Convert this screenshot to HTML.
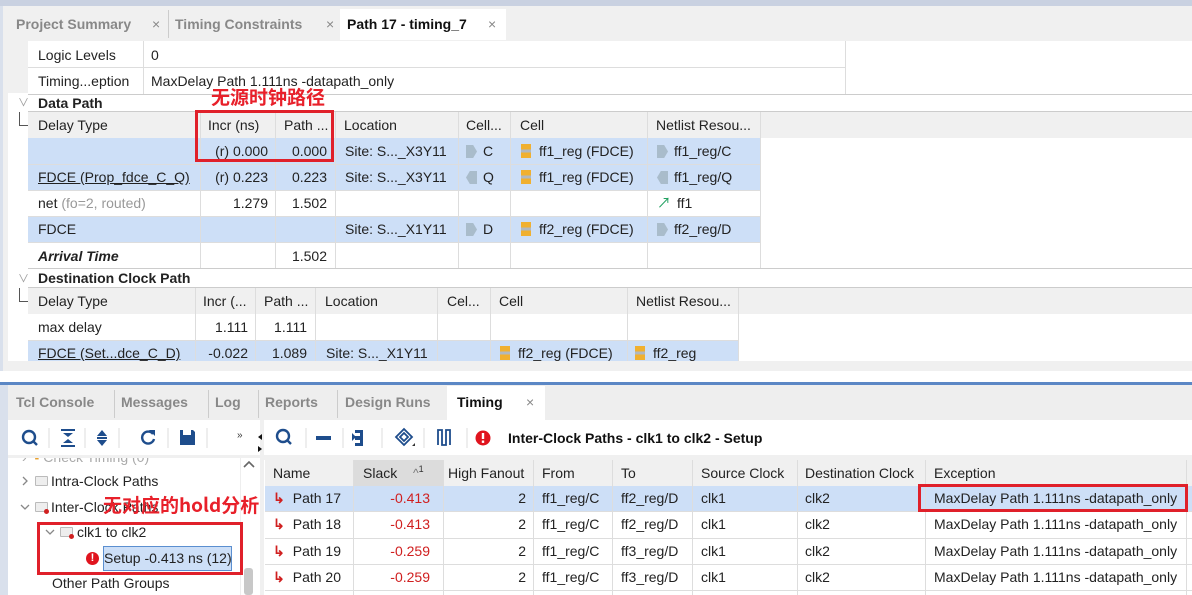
<!DOCTYPE html>
<html><head><meta charset="utf-8"><style>
*{box-sizing:border-box;margin:0;padding:0}
body{width:1192px;height:595px;overflow:hidden;background:#fff;font-family:"Liberation Sans","Noto Sans CJK SC",sans-serif;font-size:14px;color:#222;position:relative}
.a{position:absolute}
.t{position:absolute;white-space:nowrap;line-height:26px}
.hd{background:#f0f0f0}
.sel{background:#cddff7}
.vl{position:absolute;width:1px;background:#ddd}
.hl{position:absolute;height:1px;background:#ddd}
.tab{position:absolute;color:#888;font-weight:bold;font-size:14px;line-height:32px}
.box{position:absolute;border:3px solid #e0202a}
.cn{position:absolute;color:#e8202a;font-weight:bold;white-space:nowrap;font-family:"Noto Sans CJK SC","WenQuanYi Zen Hei",sans-serif;line-height:1}
.pin{display:inline-block;width:11px;height:13px;background:#a9bccb;vertical-align:-2px;margin-right:6px;clip-path:polygon(0 0,65% 0,100% 50%,65% 100%,0 100%)}
.pinl{clip-path:polygon(35% 0,100% 0,100% 100%,35% 100%,0 50%)}
.ff{display:inline-block;width:10px;height:14px;background:linear-gradient(#f0b030 0 40%,#b0b8c0 40% 60%,#f0b030 60%);vertical-align:-2px;margin-right:8px}
.arr{color:#d02020;font-weight:bold;margin-right:8px}
.fold{position:absolute;width:13px;height:10px;border:1px solid #bbb;background:#eee;border-radius:1px}
.dot{position:absolute;width:5px;height:5px;border-radius:50%;background:#d02020}
</style></head><body>
<div class="a" style="left:0;top:0;width:1192px;height:6px;background:#c9d1e1"></div>
<div class="a" style="left:0;top:6px;width:1192px;height:365px;background:#f0f0f0"></div>
<div class="a" style="left:0;top:6px;width:3px;height:365px;background:#d9e0ec"></div>
<div class="tab" style="left:16px;top:8px">Project Summary</div><div class="tab" style="left:152px;top:8px;font-weight:normal">×</div>
<div class="a" style="left:168px;top:10px;width:1px;height:28px;background:#ccc"></div>
<div class="tab" style="left:175px;top:8px">Timing Constraints</div><div class="tab" style="left:326px;top:8px;font-weight:normal">×</div>
<div class="a" style="left:340px;top:9px;width:166px;height:31px;background:#fff"></div>
<div class="tab" style="left:347px;top:8px;color:#111">Path 17 - timing_7</div><div class="tab" style="left:488px;top:8px;font-weight:normal">×</div>
<div class="a" style="left:8px;top:41px;width:1184px;height:320px;background:#fff"></div>
<div class="a" style="left:8px;top:41px;width:20px;height:52px;background:#f0f0f0"></div>
<div class="hl" style="left:28px;top:67px;width:817px"></div>
<div class="hl" style="left:28px;top:94px;width:1164px;background:#ccc"></div>
<div class="vl" style="left:143px;top:41px;height:53px"></div>
<div class="vl" style="left:845px;top:41px;height:53px"></div>
<div class="t" style="left:38px;top:42px">Logic Levels</div><div class="t" style="left:151px;top:42px">0</div>
<div class="t" style="left:38px;top:68px">Timing...eption</div><div class="t" style="left:151px;top:68px">MaxDelay Path 1.111ns -datapath_only</div>
<div class="t" style="left:18px;top:90px;color:#999;font-size:11px">∨</div>
<div class="t" style="left:38px;top:90px;font-weight:bold">Data Path</div>
<div class="a" style="left:19px;top:112px;width:10px;height:14px;border-left:1px solid #555;border-bottom:1px solid #555"></div>
<div class="a hd" style="left:28px;top:112px;width:1164px;height:26px"></div>
<div class="hl" style="left:28px;top:111px;width:1164px;background:#ccc"></div>
<div class="a sel" style="left:28px;top:138px;width:732px;height:52px"></div>
<div class="a sel" style="left:28px;top:216px;width:732px;height:26px"></div>
<div class="hl" style="left:28px;top:164px;width:732px"></div>
<div class="hl" style="left:28px;top:190px;width:732px"></div>
<div class="hl" style="left:28px;top:216px;width:732px"></div>
<div class="hl" style="left:28px;top:242px;width:732px"></div>
<div class="hl" style="left:28px;top:268px;width:1164px;background:#ccc"></div>
<div class="vl" style="left:200px;top:112px;height:156px"></div>
<div class="vl" style="left:275px;top:112px;height:156px"></div>
<div class="vl" style="left:335px;top:112px;height:156px"></div>
<div class="vl" style="left:458px;top:112px;height:156px"></div>
<div class="vl" style="left:510px;top:112px;height:156px"></div>
<div class="vl" style="left:647px;top:112px;height:156px"></div>
<div class="vl" style="left:760px;top:112px;height:156px"></div>
<div class="t" style="left:38px;top:112px">Delay Type</div><div class="t" style="left:208px;top:112px">Incr (ns)</div><div class="t" style="left:284px;top:112px">Path ...</div><div class="t" style="left:344px;top:112px">Location</div><div class="t" style="left:466px;top:112px">Cell...</div><div class="t" style="left:520px;top:112px">Cell</div><div class="t" style="left:656px;top:112px">Netlist Resou...</div>
<div class="t" style="left:210px;top:138px;width:58px;text-align:right">(r) 0.000</div><div class="t" style="left:275px;top:138px;width:52px;text-align:right">0.000</div><div class="t" style="left:345px;top:138px">Site: S..._X3Y11</div><div class="t" style="left:466px;top:138px"><span class="pin"></span>C</div><div class="t" style="left:521px;top:138px"><span class="ff"></span>ff1_reg (FDCE)</div><div class="t" style="left:657px;top:138px"><span class="pin"></span>ff1_reg/C</div>
<div class="t" style="left:38px;top:164px;text-decoration:underline">FDCE (Prop_fdce_C_Q)</div><div class="t" style="left:210px;top:164px;width:58px;text-align:right">(r) 0.223</div><div class="t" style="left:275px;top:164px;width:52px;text-align:right">0.223</div><div class="t" style="left:345px;top:164px">Site: S..._X3Y11</div><div class="t" style="left:466px;top:164px"><span class="pin pinl"></span>Q</div><div class="t" style="left:521px;top:164px"><span class="ff"></span>ff1_reg (FDCE)</div><div class="t" style="left:657px;top:164px"><span class="pin pinl"></span>ff1_reg/Q</div>
<div class="t" style="left:38px;top:190px">net <span style="color:#999">(fo=2, routed)</span></div><div class="t" style="left:210px;top:190px;width:58px;text-align:right">1.279</div><div class="t" style="left:275px;top:190px;width:52px;text-align:right">1.502</div><div class="t" style="left:657px;top:190px"><span style="color:#20a060;margin-right:6px">↗</span>ff1</div>
<div class="t" style="left:38px;top:216px">FDCE</div><div class="t" style="left:345px;top:216px">Site: S..._X1Y11</div><div class="t" style="left:466px;top:216px"><span class="pin"></span>D</div><div class="t" style="left:521px;top:216px"><span class="ff"></span>ff2_reg (FDCE)</div><div class="t" style="left:657px;top:216px"><span class="pin"></span>ff2_reg/D</div>
<div class="t" style="left:38px;top:243px;font-weight:bold;font-style:italic">Arrival Time</div><div class="t" style="left:275px;top:243px;width:52px;text-align:right">1.502</div>
<div class="t" style="left:18px;top:266px;color:#999;font-size:11px">∨</div>
<div class="t" style="left:38px;top:265px;font-weight:bold">Destination Clock Path</div>
<div class="a" style="left:19px;top:288px;width:10px;height:14px;border-left:1px solid #555;border-bottom:1px solid #555"></div>
<div class="hl" style="left:28px;top:287px;width:1164px;background:#ccc"></div>
<div class="a hd" style="left:28px;top:288px;width:1164px;height:26px"></div>
<div class="hl" style="left:28px;top:340px;width:710px"></div>
<div class="a sel" style="left:28px;top:341px;width:710px;height:20px"></div>
<div class="vl" style="left:195px;top:288px;height:73px"></div><div class="vl" style="left:255px;top:288px;height:73px"></div><div class="vl" style="left:315px;top:288px;height:73px"></div><div class="vl" style="left:437px;top:288px;height:73px"></div><div class="vl" style="left:490px;top:288px;height:73px"></div><div class="vl" style="left:627px;top:288px;height:73px"></div><div class="vl" style="left:738px;top:288px;height:73px"></div>
<div class="t" style="left:38px;top:288px">Delay Type</div><div class="t" style="left:203px;top:288px">Incr (...</div><div class="t" style="left:264px;top:288px">Path ...</div><div class="t" style="left:325px;top:288px">Location</div><div class="t" style="left:447px;top:288px">Cel...</div><div class="t" style="left:499px;top:288px">Cell</div><div class="t" style="left:636px;top:288px">Netlist Resou...</div>
<div class="t" style="left:38px;top:314px">max delay</div><div class="t" style="left:195px;top:314px;width:53px;text-align:right">1.111</div><div class="t" style="left:255px;top:314px;width:52px;text-align:right">1.111</div>
<div class="a" style="left:28px;top:340px;width:740px;height:21px;overflow:hidden"><div class="t" style="left:10px;top:0;text-decoration:underline">FDCE (Set...dce_C_D)</div><div class="t" style="left:167px;top:0;width:53px;text-align:right">-0.022</div><div class="t" style="left:227px;top:0;width:52px;text-align:right">1.089</div><div class="t" style="left:298px;top:0">Site: S..._X1Y11</div><div class="t" style="left:472px;top:0"><span class="ff"></span>ff2_reg (FDCE)</div><div class="t" style="left:607px;top:0"><span class="ff"></span>ff2_reg</div></div>
<div class="a" style="left:8px;top:361px;width:1184px;height:6px;background:#f0f0f0"></div>
<div class="box" style="left:195px;top:110px;width:139px;height:52px"></div>
<div class="cn" style="left:211px;top:87px;font-size:19px">无源时钟路径</div>
<div class="a" style="left:0;top:382px;width:1192px;height:3px;background:#5b87c5"></div>
<div class="a" style="left:0;top:385px;width:8px;height:210px;background:#d9e0ec"></div>
<div class="a" style="left:8px;top:385px;width:1184px;height:35px;background:#eeeeee"></div>
<div class="tab" style="left:16px;top:386px">Tcl Console</div><div class="a" style="left:114px;top:390px;width:1px;height:28px;background:#ccc"></div>
<div class="tab" style="left:121px;top:386px">Messages</div><div class="a" style="left:208px;top:390px;width:1px;height:28px;background:#ccc"></div>
<div class="tab" style="left:215px;top:386px">Log</div><div class="a" style="left:258px;top:390px;width:1px;height:28px;background:#ccc"></div>
<div class="tab" style="left:265px;top:386px">Reports</div><div class="a" style="left:337px;top:390px;width:1px;height:28px;background:#ccc"></div>
<div class="tab" style="left:345px;top:386px">Design Runs</div>
<div class="a" style="left:447px;top:386px;width:98px;height:34px;background:#fff"></div>
<div class="tab" style="left:457px;top:386px;color:#111">Timing</div><div class="tab" style="left:526px;top:386px;font-weight:normal">×</div>
<div class="a" style="left:8px;top:420px;width:1184px;height:36px;background:#fff"></div>
<div class="a" style="left:8px;top:455px;width:252px;height:140px;background:#fff"></div>
<div class="a" style="left:8px;top:455px;width:252px;height:3px;background:#f0f0f0"></div>
<div class="a" style="left:260px;top:420px;width:4px;height:175px;background:#f0f0f0"></div>
<div class="a" style="left:264px;top:455px;width:928px;height:5px;background:#f0f0f0"></div>
<svg class="a" style="left:8px;top:420px" width="256" height="36" viewBox="0 0 256 36">
<g fill="none" stroke="#1e4d8c" stroke-width="2.4"><circle cx="21" cy="17" r="6"/><line x1="25" y1="21" x2="29" y2="25"/></g>
<line x1="41" y1="8" x2="41" y2="28" stroke="#ddd"/>
<g fill="#1e4d8c"><rect x="53" y="9" width="14" height="2"/><rect x="53" y="25" width="14" height="2"/><path d="M55 13h10l-5 4z"/><path d="M55 23h10l-5-4z"/></g>
<line x1="77" y1="8" x2="77" y2="28" stroke="#ddd"/>
<g fill="#1e4d8c"><path d="M94 10l5 6h-10z"/><rect x="89" y="17" width="10" height="2"/><path d="M94 26l5-6h-10z"/></g>
<line x1="111" y1="8" x2="111" y2="28" stroke="#ddd"/>
<path d="M145 14a6 6 0 1 0 1 5" fill="none" stroke="#1e4d8c" stroke-width="2.4"/><path d="M141 10h6v6z" fill="#1e4d8c"/>
<line x1="160" y1="8" x2="160" y2="28" stroke="#ddd"/>
<path d="M172 10h13l2 2v13h-15z" fill="#1e4d8c"/><rect x="175" y="10" width="8" height="5" fill="#fff"/>
<line x1="199" y1="8" x2="199" y2="28" stroke="#ddd"/>
<text x="229" y="18" font-size="10" fill="#333" font-family="Liberation Sans">»</text>
<path d="M254 14l-4 3 4 3zM250 26l4 3-4 3z" fill="#111"/>
</svg>
<svg class="a" style="left:264px;top:420px" width="240" height="36" viewBox="0 0 240 36">
<g fill="none" stroke="#1e4d8c" stroke-width="2.4"><circle cx="19" cy="16" r="6"/><line x1="23" y1="20" x2="27" y2="24"/></g>
<line x1="42" y1="8" x2="42" y2="28" stroke="#ddd"/>
<rect x="52" y="16" width="15" height="4" fill="#1e4d8c"/>
<line x1="79" y1="8" x2="79" y2="28" stroke="#ddd"/>
<path d="M91 10h8v16h-8v-3h5v-3h-5v-4h5v-3h-5z" fill="#1e4d8c"/><path d="M88 13l4 4-4 4z" fill="#1e4d8c"/>
<line x1="118" y1="8" x2="118" y2="28" stroke="#ddd"/>
<g fill="none" stroke="#1e4d8c" stroke-width="1.8"><path d="M140 9l8 8-8 8-8-8z"/><path d="M140 13l4 4-4 4-4-4z"/></g><path d="M148 26l3-3v3z" fill="#333"/>
<line x1="160" y1="8" x2="160" y2="28" stroke="#ddd"/>
<path d="M174 25v-15h4v15h4v-15h4v15" fill="none" stroke="#1e4d8c" stroke-width="1.8"/>
<line x1="203" y1="8" x2="203" y2="28" stroke="#ddd"/>
<circle cx="219" cy="18" r="7.5" fill="#e0141e"/><rect x="217.8" y="13" width="2.4" height="6" fill="#fff"/><rect x="217.8" y="20.5" width="2.4" height="2.4" fill="#fff"/>
</svg>
<div class="t" style="left:508px;top:425px;font-weight:bold;color:#111">Inter-Clock Paths - clk1 to clk2 - Setup</div>
<div class="a" style="left:8px;top:458px;width:232px;height:137px;overflow:hidden">
<div class="t" style="left:14px;top:-14px;color:#aaa">›&nbsp;&nbsp;<span style="color:#e8a030">▪</span> Check Timing (0)</div>
<svg class="a" style="left:12px;top:18px" width="10" height="10"><path d="M3 1l4 4-4 4" fill="none" stroke="#888" stroke-width="1.3"/></svg>
<div class="fold" style="left:27px;top:18px"></div><div class="t" style="left:43px;top:10px">Intra-Clock Paths</div>
<svg class="a" style="left:12px;top:44px" width="10" height="10"><path d="M1 3l4 4 4-4" fill="none" stroke="#888" stroke-width="1.3"/></svg>
<div class="fold" style="left:27px;top:44px"></div><div class="dot" style="left:36px;top:51px"></div><div class="t" style="left:43px;top:36px">Inter-Clock Paths</div>
<svg class="a" style="left:37px;top:69px" width="10" height="10"><path d="M1 3l4 4 4-4" fill="none" stroke="#888" stroke-width="1.3"/></svg>
<div class="fold" style="left:52px;top:69px"></div><div class="dot" style="left:61px;top:76px"></div><div class="t" style="left:69px;top:61px">clk1 to clk2</div>
<div class="a" style="left:78px;top:94px;width:13px;height:13px;border-radius:50%;background:#e0141e;color:#fff;font-size:11px;font-weight:bold;text-align:center;line-height:13px">!</div>
<div class="a" style="left:95px;top:88px;width:129px;height:25px;background:#cddff7;border:1px solid #5b8fd0"></div>
<div class="t" style="left:96px;top:87px">Setup -0.413 ns (12)</div>
<div class="t" style="left:44px;top:112px">Other Path Groups</div>
</div>
<div class="a" style="left:240px;top:458px;width:18px;height:137px;background:#fff;border-left:1px solid #eee"></div>
<svg class="a" style="left:243px;top:460px" width="12" height="10"><path d="M1 7l5-5 5 5" fill="none" stroke="#666" stroke-width="1.6"/></svg>
<div class="a" style="left:244px;top:568px;width:9px;height:27px;background:#c8c8c8;border-radius:3px"></div>
<div class="a hd" style="left:265px;top:460px;width:927px;height:26px"></div>
<div class="a" style="left:353px;top:460px;width:90px;height:26px;background:#dcdcdc"></div>
<div class="a sel" style="left:265px;top:486px;width:927px;height:25px"></div>
<div class="hl" style="left:265px;top:511px;width:927px"></div><div class="hl" style="left:265px;top:538px;width:927px"></div><div class="hl" style="left:265px;top:564px;width:927px"></div><div class="hl" style="left:265px;top:590px;width:927px"></div>
<div class="vl" style="left:353px;top:460px;height:135px"></div><div class="vl" style="left:443px;top:460px;height:135px"></div><div class="vl" style="left:533px;top:460px;height:135px"></div><div class="vl" style="left:612px;top:460px;height:135px"></div><div class="vl" style="left:692px;top:460px;height:135px"></div><div class="vl" style="left:797px;top:460px;height:135px"></div><div class="vl" style="left:925px;top:460px;height:135px"></div><div class="vl" style="left:1186px;top:460px;height:135px"></div>
<div class="t" style="left:273px;top:460px">Name</div><div class="t" style="left:363px;top:460px">Slack</div><div class="t" style="left:413px;top:456px;color:#777;font-size:12px">^<sup style="font-size:9px;color:#333">1</sup></div><div class="t" style="left:448px;top:460px">High Fanout</div><div class="t" style="left:542px;top:460px">From</div><div class="t" style="left:621px;top:460px">To</div><div class="t" style="left:701px;top:460px">Source Clock</div><div class="t" style="left:805px;top:460px">Destination Clock</div><div class="t" style="left:934px;top:460px">Exception</div>
<div class="t" style="left:273px;top:485px"><span class="arr">↳</span>Path 17</div><div class="t" style="left:353px;top:485px;width:77px;text-align:right;color:#d02020">-0.413</div><div class="t" style="left:443px;top:485px;width:83px;text-align:right">2</div><div class="t" style="left:542px;top:485px">ff1_reg/C</div><div class="t" style="left:621px;top:485px">ff2_reg/D</div><div class="t" style="left:701px;top:485px">clk1</div><div class="t" style="left:805px;top:485px">clk2</div><div class="t" style="left:934px;top:485px">MaxDelay Path 1.111ns -datapath_only</div>
<div class="t" style="left:273px;top:511px"><span class="arr">↳</span>Path 18</div><div class="t" style="left:353px;top:511px;width:77px;text-align:right;color:#d02020">-0.413</div><div class="t" style="left:443px;top:511px;width:83px;text-align:right">2</div><div class="t" style="left:542px;top:511px">ff1_reg/C</div><div class="t" style="left:621px;top:511px">ff2_reg/D</div><div class="t" style="left:701px;top:511px">clk1</div><div class="t" style="left:805px;top:511px">clk2</div><div class="t" style="left:934px;top:511px">MaxDelay Path 1.111ns -datapath_only</div>
<div class="t" style="left:273px;top:538px"><span class="arr">↳</span>Path 19</div><div class="t" style="left:353px;top:538px;width:77px;text-align:right;color:#d02020">-0.259</div><div class="t" style="left:443px;top:538px;width:83px;text-align:right">2</div><div class="t" style="left:542px;top:538px">ff1_reg/C</div><div class="t" style="left:621px;top:538px">ff3_reg/D</div><div class="t" style="left:701px;top:538px">clk1</div><div class="t" style="left:805px;top:538px">clk2</div><div class="t" style="left:934px;top:538px">MaxDelay Path 1.111ns -datapath_only</div>
<div class="t" style="left:273px;top:564px"><span class="arr">↳</span>Path 20</div><div class="t" style="left:353px;top:564px;width:77px;text-align:right;color:#d02020">-0.259</div><div class="t" style="left:443px;top:564px;width:83px;text-align:right">2</div><div class="t" style="left:542px;top:564px">ff1_reg/C</div><div class="t" style="left:621px;top:564px">ff3_reg/D</div><div class="t" style="left:701px;top:564px">clk1</div><div class="t" style="left:805px;top:564px">clk2</div><div class="t" style="left:934px;top:564px">MaxDelay Path 1.111ns -datapath_only</div>
<div class="box" style="left:918px;top:484px;width:270px;height:28px"></div>
<div class="box" style="left:37px;top:522px;width:206px;height:53px"></div>
<div class="cn" style="left:103px;top:495px;font-size:19px">无对应的hold分析</div>
</body></html>
